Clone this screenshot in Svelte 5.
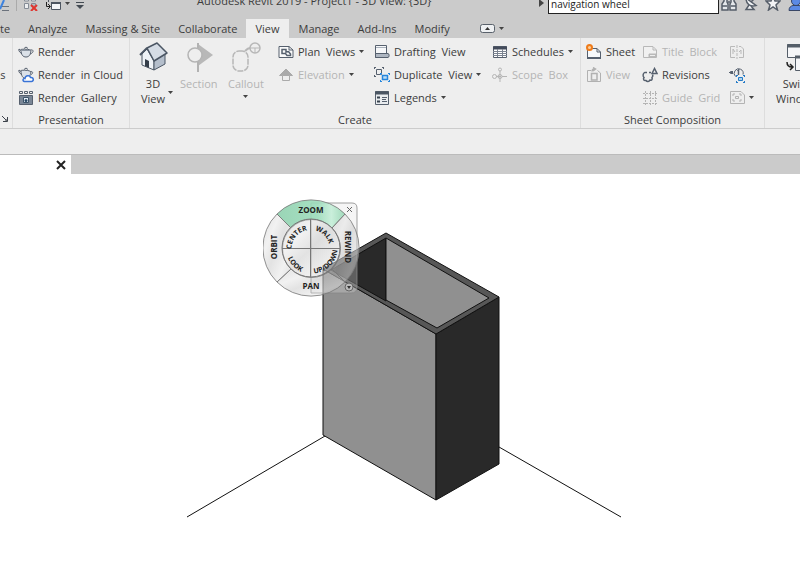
<script lang="ts">
  type Tool = { icon: string; label: string; off?: boolean; menu?: boolean };

  const tabs = ['te', 'Analyze', 'Massing & Site', 'Collaborate', 'View', 'Manage', 'Add-Ins', 'Modify'];

  const presentation: Tool[] = [
    { icon: 'teapot', label: 'Render' },
    { icon: 'cloud', label: 'Render  in Cloud' },
    { icon: 'gallery', label: 'Render  Gallery' },
  ];

  const create: Tool[][] = [
    [
      { icon: 'plan', label: 'Plan  Views', menu: true },
      { icon: 'elevation', label: 'Elevation', off: true, menu: true },
    ],
    [
      { icon: 'drafting', label: 'Drafting  View' },
      { icon: 'duplicate', label: 'Duplicate  View', menu: true },
      { icon: 'legends', label: 'Legends', menu: true },
    ],
    [
      { icon: 'schedules', label: 'Schedules', menu: true },
      { icon: 'scope', label: 'Scope  Box', off: true },
    ],
  ];

  const sheets: Tool[][] = [
    [
      { icon: 'sheet', label: 'Sheet' },
      { icon: 'sheetview', label: 'View', off: true },
    ],
    [
      { icon: 'title', label: 'Title  Block', off: true },
      { icon: 'revisions', label: 'Revisions' },
      { icon: 'grid', label: 'Guide  Grid', off: true },
    ],
    [
      { icon: 'matchline', label: '', off: true },
      { icon: 'reference', label: '' },
      { icon: 'viewports', label: '', off: true, menu: true },
    ],
  ];

  const wedges = [
    { name: 'ZOOM', d: 'M14 15A48 48 0 0 1 82 15L69 29A29 29 0 0 0 28 29Z' },
    { name: 'REWIND', d: 'M82 15A48 48 0 0 1 82 83L69 70A29 29 0 0 0 69 29Z' },
    { name: 'PAN', d: 'M82 83A48 48 0 0 1 14 83L28 70A29 29 0 0 0 69 70Z' },
    { name: 'ORBIT', d: 'M14 83A48 48 0 0 1 14 15L28 29A29 29 0 0 0 28 70Z' },
  ];

  let activeTab = $state('View');
  let activeWedge = $state('ZOOM');
  let search = $state('navigation wheel');
</script>

{#snippet caret()}
  <svg class="caret" width="5" height="3" viewBox="0 0 5 3" aria-hidden="true"><path d="M0 0H5L2.500 3Z" fill="currentColor" /></svg>
{/snippet}

{#snippet icon(name: string)}
  <svg class="icon" width="16" height="16" viewBox="0 0 16 16" fill="none" stroke="#56606e" aria-hidden="true">
    {#if name === 'teapot'}
      <path d="M3 5.5C3 11 5 13 8 13S12.500 11 13 6.500C12 5 4 5 3 5.500Z" fill="#dbe1e8" />
      <path d="M3.500 9.500C1 8 .5 6 1 5L3 6.500M12.500 6C16 5 16 9 12 10M6 4.500L8 3L10 4.500" />
      <path d="M4 6.500H12" stroke="#8d97a3" />
    {:else if name === 'cloud'}
      <path d="M3 3.500C3 9 5 11.500 8 11.500S12 9 13 5C12 3 4 3 3 3.500Z" fill="#dbe1e8" />
      <path d="M3.500 7.500C1 6 .5 4 1 3L3 4.500M12.500 4.500C15.500 4 15 7 13 7.500M6 2.500L8 1L10 2.500" />
      <path d="M6.500 14.500C4 14 5 11 7 11.500C7.500 8 12 8 12.500 10.500C16 10 16 14.500 13.500 14.500Z" fill="#fff" stroke="#3973d6" stroke-width="1.500" />
    {:else if name === 'gallery'}
      <path d="M1.500 1.500h3v2h-3zM6.500 1.500h3v2h-3zM11.500 1.500h3v2h-3z" />
      <path d="M1.500 5.500H14.500V14.500H1.500Z" fill="#7a8696" />
      <path d="M5.500 7.500H10.500V12.500H5.500Z" fill="#e7f0fa" stroke="#3c5368" />
      <circle cx="8" cy="10.500" r="1.500" fill="#284662" stroke="none" />
    {:else if name === 'plan'}
      <path d="M1 2.500H11L15 6V13.500H1Z" fill="#fafafa" />
      <path d="M11 2.500V6H15" />
      <path d="M4 5.500H8V8L10.500 7.500L12.500 10V11.500H9L7.500 9.500H4Z" stroke-width="1.500" />
    {:else if name === 'elevation'}
      <path d="M8 2L14.500 8.500H1.500Z" fill="#aaa" stroke="#aaa" />
      <path d="M4.500 8.500V13.500H11.500V8.500Z" fill="#eee" stroke="#aaa" />
    {:else if name === 'drafting'}
      <path d="M1.500 1.500H12.500V13.500H1.500Z" fill="#f7f8fa" />
      <path d="M2 3.500H12" stroke="#a9b1bb" />
      <path d="M1.500 9.500H14C15.500 9.500 15.500 13.500 14 13.500H1.500Z" fill="#aeb6c1" />
    {:else if name === 'duplicate'}
      <path d="M2.500 2.500H7.500V7.500H2.500Z" /><path d="M0 .5H2M.5 0V2M8 .5H10M9.500 0V2M0 9.500H2M.5 8V10" />
      <g stroke="#2586dd"><path d="M8.500 8.500H13.500V12.500H8.500Z" fill="#bcdcf5" stroke-width="1.500" /><path d="M6 6.500H8M6.500 6V8M14 6.500H16M15.500 6V8M6 14.500H8M6.500 13V15M14 14.500H16M15.500 13V15" /></g>
    {:else if name === 'legends'}
      <path d="M1.500 1.500H14.500V14.500H1.500Z" fill="#e9ecef" /><path d="M1 3H15" stroke="#4b5663" stroke-width="3" />
      <path d="M3 7.500H6M3 11.500H6" stroke="#38424e" stroke-width="2" /><path d="M8 7.500H13M8 9.500H12M8 11.500H13" />
    {:else if name === 'schedules'}
      <path d="M1.500 2.500H14.500V13.500H1.500Z" fill="#fff" /><path d="M1 4H15" stroke="#434b5b" stroke-width="3" />
      <path d="M5.500 5V13M10.500 5V13M1 7.500H15M1 9.500H15M1 11.500H15" stroke="#7c8491" />
    {:else if name === 'scope'}
      <g stroke="#b5b5b5"><path d="M8 4V15M4 9.500H16" stroke-dasharray="5 1" /><circle cx="8" cy="2.500" r="1.500" /><circle cx="2.500" cy="9.500" r="2" /><circle cx="8" cy="9.500" r="2" /></g>
    {:else if name === 'sheet'}
      <path d="M2.500 4.500H11L14.500 8V14.500H1.500V6Z" fill="#f6f8fa" /><path d="M11 4.500V8H14.500" />
      <path d="M1 14H15" stroke-width="2" /><circle cx="3.500" cy="3.500" r="2.500" fill="#fbd09b" stroke="#ee7b1b" stroke-width="2" />
    {:else if name === 'sheetview'}
      <g stroke="#b1b1b1"><path d="M5 3.500H1.500V14.500H14.500V6L11.500 3.500" /><path d="M5.500 13V6.500H11V13ZM6 4.500C6 2 8 2 9 2M7 .5L9.500 2L7 4" stroke-width="1.500" /></g>
    {:else if name === 'title'}
      <g stroke="#b8b8b8"><path d="M1.500 2.500H11L14.500 6V13.500H1.500Z" fill="#f1f1f1" /><path d="M11 3V6H14" /><path d="M7 10H14V13H7Z" fill="#bbb" /><path d="M8 11.500H13" stroke="#eee" /></g>
    {:else if name === 'revisions'}
      <path d="M2.500 5.500H5M7 5.500H9M10.500 7.500C11.500 9 10.500 10 10 10.500C10.500 12 10 14 8 13C7 15 5 15 4 13.500C1.500 14 1 12 2 10.500C.5 9 1 6.500 2.500 5.500" stroke-width="1.500" />
      <path d="M12.500 1.500L10 6.500H15Z" stroke-width="1.500" />
    {:else if name === 'grid'}
      <path d="M3.500 1V15M8.500 1V15M13.500 1V15M1 3.500H16M1 8.500H16M1 13.500H16" stroke="#b4b4b4" stroke-dasharray="2 1" />
    {:else if name === 'matchline'}
      <g stroke="#b9b9b9"><path d="M6 2.500H1.500V13.500H6M10 2.500H12L14.500 5V13.500H10" /><path d="M8 1V15" stroke-dasharray="3 1" /><path d="M4 10V5L6 8M12 10V6L10 8" /></g>
    {:else if name === 'reference'}
      <path d="M4 4.500H1.500V6.500H4" /><path d="M0 5.500H4" /><path d="M6.500 9.500A4.500 4.500 0 1 1 14 7.500" /><path d="M8.500 4L9.500 3V8" stroke-width="1.500" />
      <g stroke="#257bc7"><path d="M9.500 10.500H13.500V13.500H9.500Z" fill="#acd4ef" /><path d="M7 8.500H9M7.500 8V10M14 8.500H16M15.500 8V10M7 15.500H9M7.500 14V16M14 15.500H16M15.500 14V16" /></g>
    {:else if name === 'viewports'}
      <g stroke="#b3b3b3"><path d="M1.500 1.500H12L15.500 5V13.500H1.500Z" /><path d="M4 6V4H6M10 4H12V6M4 9V11H6M10 11H12V9" /><path d="M6.500 6.500H9.500V8.500H6.500Z" /></g>
    {/if}
  </svg>
{/snippet}

{#snippet toolColumn(tools: Tool[])}
  <div class="tool-column">
    {#each tools as tool}
      <button class="tool" disabled={tool.off} aria-label={tool.label || tool.icon}>
        {@render icon(tool.icon)}
        {#if tool.label}<span>{tool.label}</span>{/if}
        {#if tool.menu}{@render caret()}{/if}
      </button>
    {/each}
  </div>
{/snippet}

<div class="window">
  <header class="titlebar">
    <div class="quick">
      <button aria-label="Thin lines">
        <svg width="10" height="16" viewBox="0 0 10 16" fill="none" stroke="#6b727c"><path d="M2 11.500H9M2 15.500H9" /><path d="M0 14L4 5" stroke="#3d83df" stroke-width="2" /></svg>
      </button>
      <i class="divider"></i>
      <button aria-label="Close hidden windows">
        <svg width="16" height="16" viewBox="0 0 16 16" fill="#eceef0" stroke="#858c96"><path d="M1.500 8.500H5.500V13.500H1.500ZM8.500 8.500H12.500V10H8.500ZM1.500 2.500H5.500V6H1.500ZM8.500 2.500H12.500V6H8.500Z" /><path d="M8 10L14 16M14 10L8 16" stroke="#df352f" stroke-width="2" /></svg>
      </button>
      <button aria-label="Switch windows">
        <svg width="16" height="16" viewBox="0 0 16 16" fill="none" stroke="#4d5560"><path d="M3.500 7V4.500H15" /><path d="M6.500 8.500H15.500V14.500H6.500Z" fill="#f4f5f7" /><path d="M6 8H16" stroke-width="2" /><path d="M1.500 7V11.500H5M3 9L5.500 11.500L3 14" stroke="#222" /></svg>
        {@render caret()}
      </button>
      <button aria-label="Customize quick access toolbar">
        <svg width="8" height="16" viewBox="0 0 8 16" fill="#444b53"><path d="M0 7H8V8H0ZM0 10H8L4 14Z" /></svg>
      </button>
    </div>
    <div class="doc-title">Autodesk Revit 2019 - Project1 - 3D View: &lbrace;3D&rbrace;</div>
    <div class="info">
      <svg width="5" height="8" viewBox="0 0 5 8" fill="#444"><path d="M0 0L5 4L0 8Z" /></svg>
      <input type="text" aria-label="Search" bind:value={search} />
      <div class="info-icons">
        <button aria-label="Find">
          <svg width="16" height="16" viewBox="0 0 16 16" fill="#e5e8eb" stroke="#565e69" stroke-width="1.500"><path d="M3 3H6V7L7 9V15H1V9L3 6ZM10 3H13V6L15 9V15H9V9L10 7Z" /><path d="M7 7H9M1 11H6M10 11H15" /></svg>
        </button>
        <button aria-label="Communication center">
          <svg width="16" height="16" viewBox="0 0 16 16" fill="#f0f2f4" stroke="#565e69" stroke-width="1.500"><path d="M6 10L3 14.500H11L8 11" /><path d="M3 3C3 9 7 12 13 10.500Z" /><path d="M8 7L12 3" /></svg>
        </button>
        <button aria-label="Favorites">
          <svg width="16" height="16" viewBox="0 0 16 16" fill="#f2f3f5" stroke="#565e69" stroke-width="1.500"><path d="M8 1L10 6H15L11 10L12.500 15L8 12L3.500 15L5 10L1 6H6Z" /></svg>
        </button>
        <button aria-label="Sign in">
          <svg width="16" height="16" viewBox="0 0 16 16" fill="#5b8ae5" stroke="#394766"><circle cx="9" cy="6" r="4.500" /><path d="M2 15.500C2 12 4 11 6 10.500H12C15 11 17 13 17 15.500Z" /></svg>
        </button>
      </div>
    </div>
  </header>

  <nav class="tabs">
    {#each tabs as tab}
      <button class="tab" class:active={tab === activeTab} onclick={() => (activeTab = tab)}>{tab}</button>
    {/each}
    <button class="minimize" aria-label="Minimize ribbon">
      <svg width="15" height="9" viewBox="0 0 15 9"><rect x=".5" y=".5" width="14" height="8" rx="2" fill="#eef0f2" stroke="#59616b" /><path d="M5 6L7.500 3L10 6Z" fill="#333" /></svg>
      {@render caret()}
    </button>
  </nav>

  <div class="ribbon">
    <section class="panel edge">
      <div class="tools"><button class="tool cut">es</button></div>
      <button class="launcher" aria-label="Graphics settings">
        <svg width="6" height="6" viewBox="0 0 6 6" fill="none" stroke="#3c424b"><path d="M0 0L4 4M1 5.500H5.500V1M3 5H5V3" /></svg>
      </button>
    </section>

    <section class="panel">
      <div class="tools presentation">{@render toolColumn(presentation)}</div>
      <h2>Presentation</h2>
    </section>

    <section class="panel">
      <div class="tools create">
        <button class="big split">
          <svg width="30" height="30" viewBox="0 0 30 30" stroke="#4b5664" stroke-linejoin="round" aria-hidden="true">
            <path d="M4 12L9 7L16 19V28L4 23Z" fill="#eef2f6" />
            <path d="M16 19L27 12V22L16 28Z" fill="#b4becb" />
            <path d="M9 6L19 1L29 11L16 19Z" fill="#d5dce5" stroke-width="1.500" />
            <path d="M2 13L9 6" stroke-width="2" />
            <path d="M7 17L11 19V26L7 24Z" fill="#343d49" stroke="none" />
          </svg>
          <span>3D<br />View</span>{@render caret()}
        </button>
        <button class="big" disabled>
          <svg width="30" height="30" viewBox="0 0 30 30" aria-hidden="true"><path d="M14 2L29 13L14 24Z" fill="#b8b8b8" /><path d="M14 1V30" stroke="#b2b2b2" stroke-width="2" /><circle cx="11" cy="13" r="7" fill="#eee" stroke="#b4b4b4" stroke-width="1.500" /></svg>
          <span>Section</span>
        </button>
        <button class="big" disabled>
          <svg width="30" height="30" viewBox="0 0 30 30" fill="none" stroke="#b7b7b7" aria-hidden="true"><rect x="2" y="9" width="15" height="20" rx="6" stroke-width="1.500" stroke-dasharray="6 1" /><path d="M14 9C16 7 17 6 19 6" stroke-width="2" /><circle cx="24" cy="6" r="5" stroke-width="1.500" /><path d="M19 6H29M24 6V11" /></svg>
          <span>Callout</span>{@render caret()}
        </button>
        {#each create as tools}{@render toolColumn(tools)}{/each}
      </div>
      <h2>Create</h2>
    </section>

    <section class="panel">
      <div class="tools sheets">
        {#each sheets as tools}{@render toolColumn(tools)}{/each}
      </div>
      <h2>Sheet Composition</h2>
    </section>

    <section class="panel windows">
      <div class="tools">
        <button class="big">
          <svg width="30" height="30" viewBox="0 0 30 30" fill="#f5f6f8" stroke="#555e69" aria-hidden="true"><path d="M3.500 2.500H26.500V15.500H3.500Z" /><path d="M3 4H27" stroke-width="3" /><path d="M11.500 14.500H30V28.500H11.500Z" /><path d="M11 15H30" stroke-width="3" /><path d="M3 20C3 24 5 25 8 25M6 22L9 25L6 28" fill="none" stroke="#222" stroke-width="1.500" /></svg>
          <span>Switch<br />Windows</span>
        </button>
      </div>
    </section>
  </div>

  <div class="options-bar"></div>

  <div class="view-tabs">
    <div class="view-tab">
      <button aria-label="Close view"><svg width="10" height="10" viewBox="0 0 10 10" stroke="#222" stroke-width="2"><path d="M1 1L9 9M9 1L1 9" /></svg></button>
    </div>
  </div>

  <main>
    <svg class="model" viewBox="0 0 800 392" role="img" aria-label="Isometric box">
      <g stroke="#111" stroke-linejoin="round">
        <path d="M325 262L187 343M499 273L621 343" fill="none" />
        <path d="M323 95L436 160V326L323 261Z" fill="#909090" />
        <path d="M436 160L499 123V290L436 326Z" fill="#292929" />
        <path d="M323 95L386 59L499 123L436 160Z" fill="#575757" />
        <path d="M331 96L386 64V127Z" fill="#292929" />
        <path d="M386 64L489 124L437 154L386 126Z" fill="#909090" />
      </g>
    </svg>

    <svg class="wheel" viewBox="0 0 98 98" role="group" aria-label="Navigation wheel">
      <defs>
        <linearGradient id="steel" x2="1" y2="1"><stop offset="0" stop-color="#b4b4b4" /><stop offset=".3" stop-color="#ddd" /><stop offset=".5" stop-color="#b8b8b8" /><stop offset=".75" stop-color="#ddd" /><stop offset="1" stop-color="#aaa" /></linearGradient>
        <linearGradient id="mint"><stop offset="0" stop-color="#8fd0ae" /><stop offset=".6" stop-color="#9cdcbb" /><stop offset=".8" stop-color="#c5eed8" /><stop offset="1" stop-color="#97d6b4" /></linearGradient>
        <path id="arc-center" d="M29 55A19 19 0 0 1 49 31" />
        <path id="arc-walk" d="M45 32A17 17 0 0 1 66 52" />
        <path id="arc-look" d="M23 46A26 26 0 0 0 51 75" />
        <path id="arc-updown" d="M45 74A25 25 0 0 0 74 45" />
      </defs>
      <path d="M48 4H89Q94 4 94 9V88Q94 94 88 94H48Z" fill="#ddd" fill-opacity=".3" stroke="#888" stroke-opacity=".8" />
      {#each wedges as wedge}
        <!-- svelte-ignore a11y_mouse_events_have_key_events -->
        <path
          class="wedge"
          class:active={wedge.name === activeWedge}
          role="button"
          tabindex="-1"
          aria-label={wedge.name}
          d={wedge.d}
          onmouseover={() => (activeWedge = wedge.name)}
        />
      {/each}
      <circle cx="48" cy="49" r="29" fill="url(#steel)" fill-opacity=".4" stroke="#777" />
      <path d="M47.500 20V78M19 49.500H77" stroke="#777" />
      <text x="48" y="14">ZOOM</text>
      <text x="48" y="90">PAN</text>
      <text transform="translate(14 48) rotate(-90)">ORBIT</text>
      <text transform="translate(82 48) rotate(90)">REWIND</text>
      <g class="inner">
        <text><textPath href="#arc-center" startOffset="50%">CENTER</textPath></text>
        <text><textPath href="#arc-walk" startOffset="50%">WALK</textPath></text>
        <text><textPath href="#arc-look" startOffset="50%">LOOK</textPath></text>
        <text><textPath href="#arc-updown" startOffset="50%">UP/DOWN</textPath></text>
      </g>
      <path d="M84 8L89 13M89 8L84 13" stroke="#666" />
      <circle cx="86" cy="88" r="4" fill="#bbb" stroke="#666" />
      <path d="M84 87H88L86 90Z" fill="#333" />
    </svg>
  </main>
</div>

<style>
  :global(body) {
    margin: 0;
    background: #fff;
  }

  .window {
    min-height: 100vh;
    overflow: hidden;
    display: flex;
    flex-direction: column;
    font: 11px/16px "Open Sans", "Noto Sans", sans-serif;
    color: #3c3c3c;
    background: #fff;
  }

  button {
    font: inherit;
    color: inherit;
    border: 0;
    padding: 0;
    background: none;
    white-space: pre;
  }

  button:disabled {
    color: #b4b4b4;
  }

  svg {
    display: block;
    flex: none;
  }

  .titlebar {
    height: 19px;
    display: grid;
    grid-template-columns: 197px 1fr 261px;
    grid-template-rows: 100%;
    align-items: end;
    background: #cbcbcb;
  }

  .quick {
    display: flex;
    align-items: flex-end;
    height: 11px;
    margin-bottom: 8px;
    gap: 6px;
  }

  .quick button {
    display: flex;
    align-items: center;
    gap: 4px;
  }

  .quick .divider {
    width: 1px;
    height: 13px;
    background: #aaa;
  }

  .doc-title {
    height: 16px;
    margin-bottom: 10px;
    white-space: nowrap;
  }

  .info {
    display: flex;
    align-items: flex-end;
    height: 14px;
    margin-bottom: 5px;
  }

  .info > svg {
    margin-bottom: 7px;
  }

  .info input {
    box-sizing: border-box;
    flex: none;
    width: 171px;
    height: 22px;
    margin-left: 4px;
    padding: 2px 2px 0;
    font: inherit;
    font-size: 10px;
    color: #222;
    background: #fff;
    border: 1px solid #222;
  }

  .info-icons {
    display: flex;
    gap: 6px;
    margin: 0 0 3px 2px;
  }

  .tabs {
    display: flex;
    height: 19px;
    background: #cbcbcb;
  }

  .tab {
    padding: 0 9px;
  }

  .tab:first-child {
    padding-left: 0;
  }

  .tab.active {
    padding: 0 10px 0 9px;
    background: #eee;
  }

  .minimize {
    display: flex;
    align-items: center;
    gap: 4px;
    margin-left: 21px;
  }

  .ribbon {
    display: grid;
    grid-template-columns: 13px 117px 451px 184px 1fr;
    height: 90px;
    background: #eee;
    border-bottom: 1px solid #ccc;
  }

  .panel {
    min-width: 0;
    display: flex;
    flex-direction: column;
    justify-content: space-between;
    border-right: 1px solid #ddd;
  }

  .panel h2 {
    margin: 0;
    font-size: 11px;
    font-weight: normal;
    text-align: center;
  }

  .tools {
    padding-top: 2px;
  }

  .tool {
    display: flex;
    align-items: center;
    gap: 4px;
    height: 23px;
  }

  .tool.cut {
    margin: 23px 0 0 -6px;
  }

  .launcher {
    margin: 0 0 6px 2px;
  }

  .presentation {
    padding-left: 5px;
  }

  .create {
    display: grid;
    grid-template-columns: 46px 48px 52px 96px 118px 1fr;
    align-items: start;
    justify-items: start;
    padding-left: 2px;
  }

  .sheets {
    display: grid;
    grid-template-columns: 56px 87px 1fr;
    padding-left: 5px;
  }

  .big {
    position: relative;
    display: flex;
    flex-direction: column;
    align-items: center;
    line-height: 15px;
    padding: 2px 2px 0;
    gap: 4px;
  }

  .split {
    padding: 2px 6px 0;
  }

  .split .caret {
    position: absolute;
    right: 1px;
    bottom: 12px;
  }

  .windows {
    border-right: 0;
  }

  .windows .big {
    margin-left: 9px;
  }

  .caret {
    color: #444;
  }

  .options-bar {
    height: 25px;
    background: #eee;
    border-bottom: 1px solid #bbb;
  }

  .view-tabs {
    height: 19px;
    display: flex;
    background: #cbcbcb;
  }

  .view-tab {
    width: 71px;
    display: flex;
    align-items: center;
    justify-content: flex-end;
    background: #fff;
  }

  .view-tab button {
    margin-right: 5px;
  }

  main {
    position: relative;
  }

  .model {
    width: 100%;
  }

  .wheel {
    position: absolute;
    left: 263px;
    top: 25px;
    width: 98px;
    height: 98px;
  }

  .wedge {
    fill: url(#steel);
    fill-opacity: 0.4;
    stroke: #777;
    stroke-opacity: 0.8;
    outline: none;
  }

  .wedge.active {
    fill: url(#mint);
    fill-opacity: 0.9;
  }

  .wheel text {
    font: bold 8px "Open Sans", sans-serif;
    fill: #222;
    text-anchor: middle;
    pointer-events: none;
  }

  .wheel .inner text {
    font-size: 7px;
  }
</style>
